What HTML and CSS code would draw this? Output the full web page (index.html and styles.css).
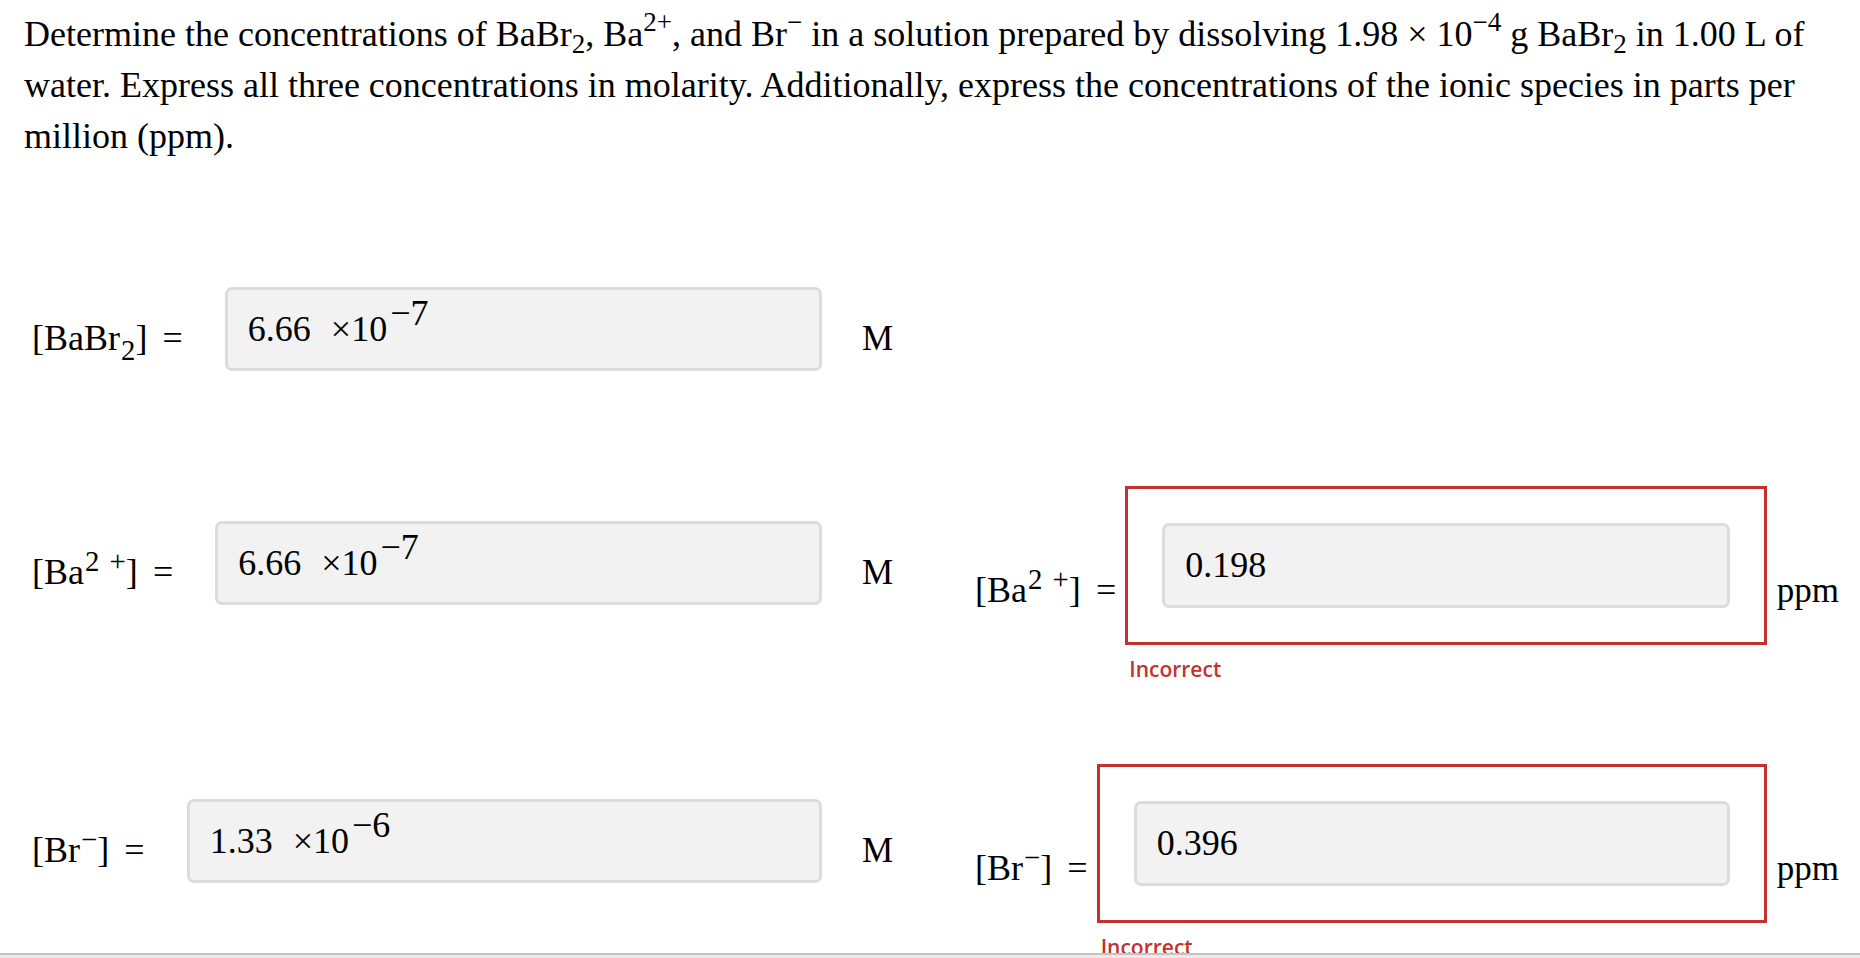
FILE: index.html
```html
<!DOCTYPE html>
<html lang="en">
<head>
<meta charset="utf-8">
<title>Concentrations of BaBr2</title>
<link rel="stylesheet" href="styles.css">
</head>
<body>
<div class="page">
  <p class="question">Determine the concentrations of BaBr<sub>2</sub>, Ba<sup>2+</sup>, and Br<sup>−</sup> in a solution prepared by dissolving 1.98 × 10<sup>−4</sup> g BaBr<sub>2</sub> in 1.00 L of water. Express all three concentrations in molarity. Additionally, express the concentrations of the ionic species in parts per million (ppm).</p>

  <div class="answers">
    <div class="row">
      <div class="field">
        <span class="label">[BaBr<span class="lo">2</span>]<span class="eq">=</span></span>
        <div class="box"><span>6.66</span><span class="times">×</span>10<span class="hi">−7</span></div>
      </div>
      <div class="unit">M</div>
    </div>

    <div class="row row-fb">
      <div class="field">
        <span class="label">[Ba<span class="hi-l">2 +</span>]<span class="eq">=</span></span>
        <div class="box"><span>6.66</span><span class="times">×</span>10<span class="hi">−7</span></div>
      </div>
      <div class="unit">M</div>
      <div class="ppm-field">
        <span class="label label-r">[Ba<span class="hi-l">2 +</span>]<span class="eq">=</span></span>
        <div class="check">
          <div class="frame"><div class="box">0.198</div></div>
          <div class="msg">Incorrect</div>
        </div>
        <span class="unit-ppm">ppm</span>
      </div>
    </div>

    <div class="row row-fb row-last">
      <div class="field">
        <span class="label">[Br<span class="hi-l">−</span>]<span class="eq">=</span></span>
        <div class="box"><span>1.33</span><span class="times">×</span>10<span class="hi">−6</span></div>
      </div>
      <div class="unit">M</div>
      <div class="ppm-field">
        <span class="label label-r">[Br<span class="hi-l">−</span>]<span class="eq">=</span></span>
        <div class="check">
          <div class="frame"><div class="box">0.396</div></div>
          <div class="msg">Incorrect</div>
        </div>
        <span class="unit-ppm">ppm</span>
      </div>
    </div>
  </div>
</div>
<div class="bottom-edge"></div>
</body>
</html>
```

FILE: styles.css
```css
html, body {
  margin: 0;
  padding: 0;
  background: #ffffff;
}

body {
  font-family: "Liberation Serif", "Times New Roman", serif;
  color: #000000;
}

.page {
  padding: 9px 24px 0 24px;
}

.question {
  margin: 0;
  font-size: 36px;
  line-height: 51px;
}

.question sub,
.question sup {
  font-size: 0.75em;
  line-height: 0;
}

.question sub {
  vertical-align: -0.25em;
}

.question sup {
  vertical-align: 0.55em;
}

.answers {
  margin-top: 125px;
  padding-left: 8px;
}

.row {
  display: flex;
  align-items: flex-start;
}

.row-fb {
  margin-top: 115px;
}

.row-last {
  margin-top: 81px;
}

.field {
  flex: none;
  width: 790px;
  display: flex;
  align-items: flex-start;
}

.label {
  flex: none;
  font-size: 36px;
  line-height: 36px;
  margin-top: 33px;
  margin-right: 42px;
  white-space: nowrap;
}

.lo {
  position: relative;
  top: 0.34em;
  font-size: 0.8em;
  margin-left: 1px;
}

.hi-l {
  position: relative;
  top: -0.45em;
  font-size: 0.8em;
  margin-left: 1px;
  word-spacing: 3px;
}

.eq {
  margin-left: 0.42em;
}

.box {
  flex: 1;
  box-sizing: border-box;
  height: 84px;
  border: 3px solid #dcdcdc;
  border-radius: 7px;
  background: #f2f2f2;
  padding: 21px 0 0 20px;
  font-size: 36px;
  line-height: 36px;
  white-space: nowrap;
}

.times {
  margin-left: 20px;
}

.hi {
  position: relative;
  top: -0.45em;
  font-size: 1em;
  margin-left: 3px;
}

.unit {
  flex: none;
  box-sizing: border-box;
  width: 153px;
  padding-left: 40px;
  margin-top: 34px;
  font-size: 35px;
  line-height: 35px;
}

.row-fb .field {
  margin-top: 35px;
}

.row-fb .unit {
  margin-top: 69px;
}

.ppm-field {
  flex: none;
  width: 864px;
  display: flex;
  align-items: flex-start;
}

.label-r {
  margin-top: 86px;
  margin-right: 9px;
}

.check {
  flex: 1;
  min-width: 0;
}

.frame {
  border: 3px solid #c3312f;
  padding: 34px;
}

.frame .box {
  display: block;
  height: 85px;
}

.msg {
  margin-top: 10px;
  padding-left: 4px;
  font-family: "Open Sans", "Noto Sans", sans-serif;
  font-weight: 600;
  font-size: 21px;
  line-height: 28px;
  color: #c3312f;
}

.unit-ppm {
  flex: none;
  margin-top: 87px;
  margin-left: 10px;
  font-size: 35px;
  line-height: 35px;
}

.bottom-edge {
  position: fixed;
  left: 0;
  right: 0;
  bottom: 0;
  height: 3px;
  border-top: 2px solid #c4c4c4;
  background: #ebebeb;
}
```
